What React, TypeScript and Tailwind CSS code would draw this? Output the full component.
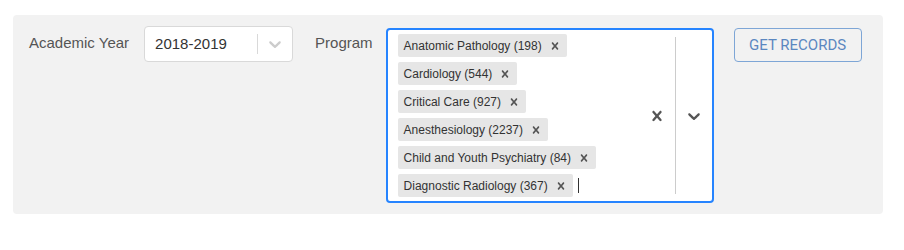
import React from "react";

const CROSS =
  "M14.348 14.849c-0.469 0.469-1.229 0.469-1.697 0l-2.651-3.030-2.651 3.029c-0.469 0.469-1.229 0.469-1.697 0-0.469-0.469-0.469-1.229 0-1.697l2.758-3.15-2.759-3.152c-0.469-0.469-0.469-1.228 0-1.697s1.228-0.469 1.697 0l2.652 3.031 2.651-3.031c0.469-0.469 1.228-0.469 1.697 0s0.469 1.229 0 1.697l-2.758 3.152 2.758 3.15c0.469 0.469 0.469 1.229 0 1.698z";
const CHEVRON =
  "M4.516 7.548c0.436-0.446 1.043-0.481 1.576 0l3.908 3.747 3.908-3.747c0.533-0.481 1.141-0.446 1.574 0 0.436 0.445 0.408 1.197 0 1.615-0.406 0.418-4.695 4.502-4.695 4.502-0.217 0.223-0.502 0.335-0.787 0.335s-0.57-0.112-0.789-0.335c0 0-4.287-4.084-4.695-4.502s-0.436-1.17 0-1.615z";

const Glyph = ({ d, size, className }: { d: string; size: number; className?: string }) => (
  <svg viewBox="0 0 20 20" width={size} height={size} className={className} fill="currentColor">
    <path d={d} />
  </svg>
);

const programs = [
  "Anatomic Pathology (198)",
  "Cardiology (544)",
  "Critical Care (927)",
  "Anesthesiology (2237)",
  "Child and Youth Psychiatry (84)",
  "Diagnostic Radiology (367)",
];

const Chip = ({ label, last }: { label: string; last?: boolean }) => (
  <div className="flex items-center">
    <div className="flex h-[23px] items-center rounded-[2px] bg-[#e6e6e6] pl-[6px] pr-[5px]">
      <span className="text-[12px] leading-none text-[#333]">{label}</span>
      <Glyph d={CROSS} size={14} className="ml-[6px] text-[#555]" />
    </div>
    {last && <span className="ml-[5px] h-[15px] w-px bg-[#333]" />}
  </div>
);

export default function App() {
  return (
    <div className="h-[250px] w-[904px] bg-white pl-[13px] pt-[15px] font-['Liberation_Sans',Arial,sans-serif]">
      <div className="flex h-[199px] w-[870px] items-start rounded-[4px] bg-[#f2f2f2] pl-[16px] pt-[11px]">
        <label className="mt-[8px] text-[15px] leading-[18px] text-[#555]">Academic Year</label>

        <div className="ml-[15px] flex h-[36px] w-[149px] items-center rounded-[4px] border border-[#d9d9d9] bg-white">
          <span className="flex-1 pl-[10px] text-[15px] text-[#333]">2018-2019</span>
          <span className="h-[20px] w-px bg-[#d9d9d9]" />
          <Glyph d={CHEVRON} size={20} className="mx-[7px] text-[#ccc]" />
        </div>

        <label className="ml-[22px] mt-[8px] text-[15px] leading-[18px] text-[#555]">Program</label>

        <div className="ml-[13px] mt-[2px] flex h-[175px] w-[328px] rounded-[4px] border-2 border-[#2684ff] bg-white">
          <div className="flex flex-1 flex-col items-start gap-[5px] pl-[10px] pt-[4px]">
            {programs.map((p, i) => (
              <Chip key={p} label={p} last={i === programs.length - 1} />
            ))}
          </div>
          <div className="flex items-center">
            <div className="flex px-[8px] text-[#555]">
              <Glyph d={CROSS} size={20} />
            </div>
            <span className="h-[157px] w-px bg-[#ccc]" />
            <div className="flex px-[8px] text-[#555]">
              <Glyph d={CHEVRON} size={20} />
            </div>
          </div>
        </div>

        <button className="ml-[20px] mt-[2px] h-[34px] w-[128px] rounded-[4px] border border-[#7ea6d6] font-['Roboto',sans-serif] text-[15px] text-[#5b87c0]">
          GET RECORDS
        </button>
      </div>
    </div>
  );
}
